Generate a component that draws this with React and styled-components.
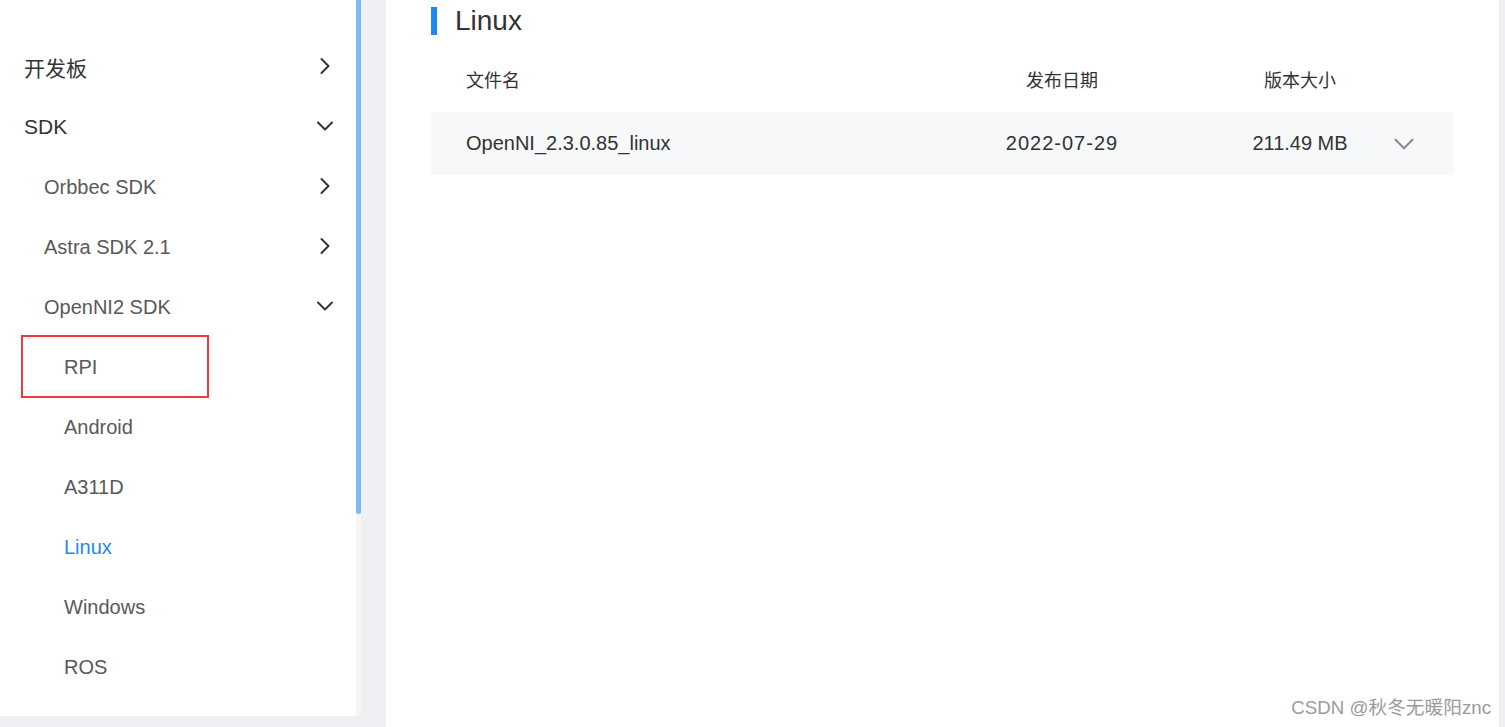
import { createGlobalStyle, styled } from "styled-components";
import { ChevronRight, ChevronDown } from "lucide-react";

const GlobalStyle = createGlobalStyle`
  html, body {
    margin: 0;
    padding: 0;
    background: #eff0f3;
    font-family: "Liberation Sans", "Noto Sans CJK SC", Arial, sans-serif;
  }
`;

const menu = [
  { label: "开发板", level: 0, arrow: "right" },
  { label: "SDK", level: 0, arrow: "down" },
  { label: "Orbbec SDK", level: 1, arrow: "right" },
  { label: "Astra SDK 2.1", level: 1, arrow: "right" },
  { label: "OpenNI2 SDK", level: 1, arrow: "down" },
  { label: "RPI", level: 2, marked: true },
  { label: "Android", level: 2 },
  { label: "A311D", level: 2 },
  { label: "Linux", level: 2, active: true },
  { label: "Windows", level: 2 },
  { label: "ROS", level: 2 },
];

const files = [
  { name: "OpenNI_2.3.0.85_linux", date: "2022-07-29", size: "211.49 MB" },
];

const App = () => {
  return (
    <>
      <GlobalStyle />
      <StPage>
        <StSideWrap>
          <StSide>
            {menu.map((item) => (
              <StItem
                key={item.label}
                $level={item.level}
                $active={item.active}
                $marked={item.marked}
              >
                <span>{item.label}</span>
                {item.arrow === "right" && (
                  <ChevronRight size={28} strokeWidth={1.7} color="#333" />
                )}
                {item.arrow === "down" && (
                  <ChevronDown size={28} strokeWidth={1.7} color="#333" />
                )}
              </StItem>
            ))}
          </StSide>
          <StTrack>
            <StThumb />
          </StTrack>
        </StSideWrap>

        <StMain>
          <StTitle>
            <StTitleBar />
            Linux
          </StTitle>
          <StTable>
            <StHead>
              <StCell>文件名</StCell>
              <StCell $center>发布日期</StCell>
              <StCell $center>版本大小</StCell>
              <StCell />
            </StHead>
            {files.map((file) => (
              <StRow key={file.name}>
                <StCell>{file.name}</StCell>
                <StCell $center $spaced>
                  {file.date}
                </StCell>
                <StCell $center>{file.size}</StCell>
                <StCell $center>
                  <ChevronDown size={34} strokeWidth={1.5} color="#8a8d93" />
                </StCell>
              </StRow>
            ))}
          </StTable>
          <StMark>CSDN @秋冬无暖阳znc</StMark>
        </StMain>
        <StEdge />
      </StPage>
    </>
  );
};

const StPage = styled.div`
  display: flex;
  height: 727px;
  overflow: hidden;
`;

const StSideWrap = styled.div`
  display: flex;
  height: 716px;
  flex: 0 0 auto;
`;

const StSide = styled.ul`
  width: 356px;
  margin: 0;
  padding: 37px 0 0;
  list-style: none;
  background: #fff;
  box-sizing: border-box;
`;

const StItem = styled.li`
  position: relative;
  display: flex;
  align-items: center;
  justify-content: space-between;
  height: 60px;
  padding: 0 17px 0 ${({ $level }) => 24 + $level * 20}px;

  font-size: ${({ $level }) => ($level === 0 ? "21px" : "20px")};
  color: ${({ $level, $active }) =>
    $active ? "#1e88f2" : $level === 0 ? "#333" : "#595959"};

  svg {
    margin-top: -2px;
  }

  ${({ $marked }) =>
    $marked &&
    `
    &::after {
      content: "";
      position: absolute;
      left: 21px;
      top: -2px;
      width: 188px;
      height: 63px;
      border: 2px solid #f03b3b;
      box-sizing: border-box;
    }
  `}
`;

const StTrack = styled.div`
  width: 5px;
  background: #f5f5f6;
`;

const StThumb = styled.div`
  height: 514px;
  background: #7db7f6;
  border-radius: 0 0 3px 3px;
`;

const StMain = styled.main`
  position: relative;
  width: 1113px;
  margin-left: 25px;
  padding: 7px 45px 0;
  box-sizing: border-box;
  background: #fff;
`;

const StTitle = styled.h2`
  display: flex;
  align-items: center;
  gap: 18px;
  height: 28px;
  margin: 0;

  font-size: 28px;
  font-weight: 400;
  color: #333;
`;

const StTitleBar = styled.span`
  width: 6px;
  height: 28px;
  background: #1e88f2;
`;

const StTable = styled.div`
  margin-top: 10px;
`;

const StHead = styled.div`
  display: grid;
  grid-template-columns: 1fr 368px 108px 100px;
  align-items: center;
  height: 67px;
  padding-left: 35px;

  font-size: 18px;
  color: #333;
`;

const StRow = styled(StHead)`
  height: 63px;
  background: #f7f8fa;
  font-size: 20px;
`;

const StCell = styled.div`
  display: flex;
  align-items: center;
  justify-content: ${({ $center }) => ($center ? "center" : "flex-start")};
  letter-spacing: ${({ $spaced }) => ($spaced ? "1px" : "normal")};
  white-space: nowrap;
`;

const StMark = styled.div`
  position: absolute;
  right: 8px;
  bottom: 8px;

  font-size: 18.7px;
  color: #9a9a9a;
  text-shadow: 1px 1px 0 #fff;
`;

const StEdge = styled.div`
  flex: 1;
`;

export default App;
